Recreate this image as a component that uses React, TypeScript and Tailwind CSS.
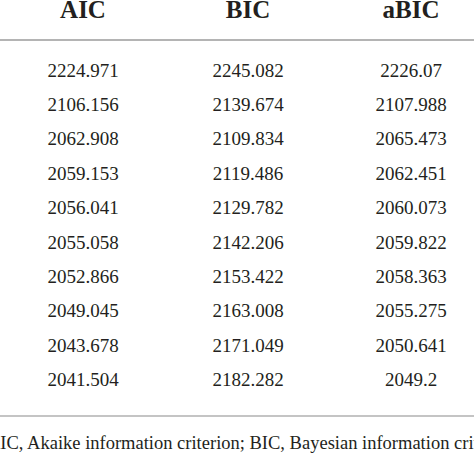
const rows: [string, string, string][] = [
  ["2224.971", "2245.082", "2226.07"],
  ["2106.156", "2139.674", "2107.988"],
  ["2062.908", "2109.834", "2065.473"],
  ["2059.153", "2119.486", "2062.451"],
  ["2056.041", "2129.782", "2060.073"],
  ["2055.058", "2142.206", "2059.822"],
  ["2052.866", "2153.422", "2058.363"],
  ["2049.045", "2163.008", "2055.275"],
  ["2043.678", "2171.049", "2050.641"],
  ["2041.504", "2182.282", "2049.2"],
];

const cols = "grid grid-cols-[166px_164px_162px]";

export default function App() {
  return (
    <div
      className="w-[474px] h-[474px] overflow-hidden bg-white text-[#231f20]"
      style={{ fontFamily: '"Liberation Serif", "Times New Roman", serif' }}
    >
      <div className={`${cols} h-[39px] items-start text-[25px] font-bold leading-[19px]`}>
        <div className="text-center">AIC</div>
        <div className="text-center">BIC</div>
        <div className="text-center">aBIC</div>
      </div>
      <div className="h-[2px] bg-[#b4b4b4]" />
      <div className="pt-[12px] pb-[18px]">
        {rows.map((r) => (
          <div key={r[0]} className={`${cols} h-[34.4px] items-center text-[19px] leading-none`}>
            <div className="text-center">{r[0]}</div>
            <div className="text-center">{r[1]}</div>
            <div className="text-center">{r[2]}</div>
          </div>
        ))}
      </div>
      <div className="h-[2px] bg-[#c4c4c4]" />
      <div className="mt-[17px] -ml-[13px] whitespace-nowrap text-[18.5px] leading-none">
        AIC, Akaike information criterion; BIC, Bayesian information criterion
      </div>
    </div>
  );
}
